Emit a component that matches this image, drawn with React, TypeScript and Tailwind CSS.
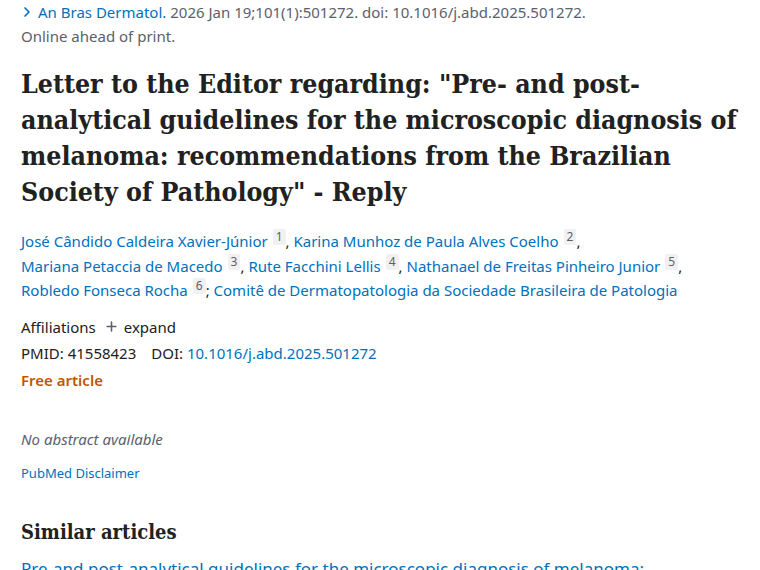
import { ChevronRight, Plus } from 'lucide-react';

const sans = { fontFamily: '"Noto Sans", "Open Sans", sans-serif' };
const serif = { fontFamily: '"DejaVu Serif Condensed", "DejaVu Serif", serif' };

const Sup = ({ n }: { n: number }) => (
  <span className="relative -top-[6px] ml-[5px] inline-block rounded-[2px] bg-[#f1f1f1] px-[3px] text-[12px] leading-[16px] text-[#5b616b]">
    {n}
  </span>
);

const Author = ({ name, n, sep }: { name: string; n: number; sep: string }) => (
  <span>
    <a className="text-[#0071bc]">{name}</a>
    <Sup n={n} />
    {sep}
  </span>
);

export default function App() {
  return (
    <div className="min-h-[570px] w-[760px] overflow-hidden bg-white pl-[21px] text-[#212121]" style={sans}>
      <div className="text-[15px] leading-[24px] text-[#5b616b]">
        <div className="flex items-center">
          <ChevronRight size={16} strokeWidth={2.5} className="-ml-[2px] mr-[3px] text-[#0071bc]" />
          <span className="text-[#0071bc]">An Bras Dermatol.</span>
          <span>&nbsp;2026 Jan 19;101(1):501272. doi: 10.1016/j.abd.2025.501272.</span>
        </div>
        <div>Online ahead of print.</div>
      </div>

      <h1 className="mt-[18px] whitespace-nowrap text-[26.5px] font-bold leading-[36px] text-[#212121]" style={serif}>
        Letter to the Editor regarding: "Pre- and post-
        <br />
        analytical guidelines for the microscopic diagnosis of
        <br />
        melanoma: recommendations from the Brazilian
        <br />
        Society of Pathology" - Reply
      </h1>

      <div className="mt-[19px] whitespace-nowrap text-[15px] leading-[24.5px]">
        <Author name="José Cândido Caldeira Xavier-Júnior" n={1} sep=", " />
        <Author name="Karina Munhoz de Paula Alves Coelho" n={2} sep="," />
        <br />
        <Author name="Mariana Petaccia de Macedo" n={3} sep=", " />
        <Author name="Rute Facchini Lellis" n={4} sep=", " />
        <Author name="Nathanael de Freitas Pinheiro Junior" n={5} sep="," />
        <br />
        <Author name="Robledo Fonseca Rocha" n={6} sep="; " />
        <a className="text-[#0071bc]">Comitê de Dermatopatologia da Sociedade Brasileira de Patologia</a>
      </div>

      <div className="mt-[11px] flex items-center text-[15px] leading-[26px]">
        <span>Affiliations</span>
        <Plus size={15} strokeWidth={2.5} className="ml-[8px] mr-[5px] text-[#5b616b]" />
        <span>expand</span>
      </div>
      <div className="text-[15px] leading-[26px]">
        PMID: 41558423<span className="ml-[15px]">DOI: </span>
        <a className="text-[#0071bc]">10.1016/j.abd.2025.501272</a>
      </div>
      <div className="text-[15px] font-semibold leading-[28px] text-[#c05600]">Free article</div>

      <div className="mt-[33px] text-[15px] italic leading-[24px] text-[#5b616b]">No abstract available</div>
      <div className="mt-[12px] text-[13px] leading-[20px] text-[#0071bc]">PubMed Disclaimer</div>

      <h2 className="mt-[34px] text-[20px] font-bold leading-[30px] text-[#212121]" style={serif}>
        Similar articles
      </h2>
      <div className="mt-[10px] whitespace-nowrap text-[17px] leading-[24px] text-[#0071bc]">
        Pre-and post-analytical guidelines for the microscopic diagnosis of melanoma:
      </div>
    </div>
  );
}
